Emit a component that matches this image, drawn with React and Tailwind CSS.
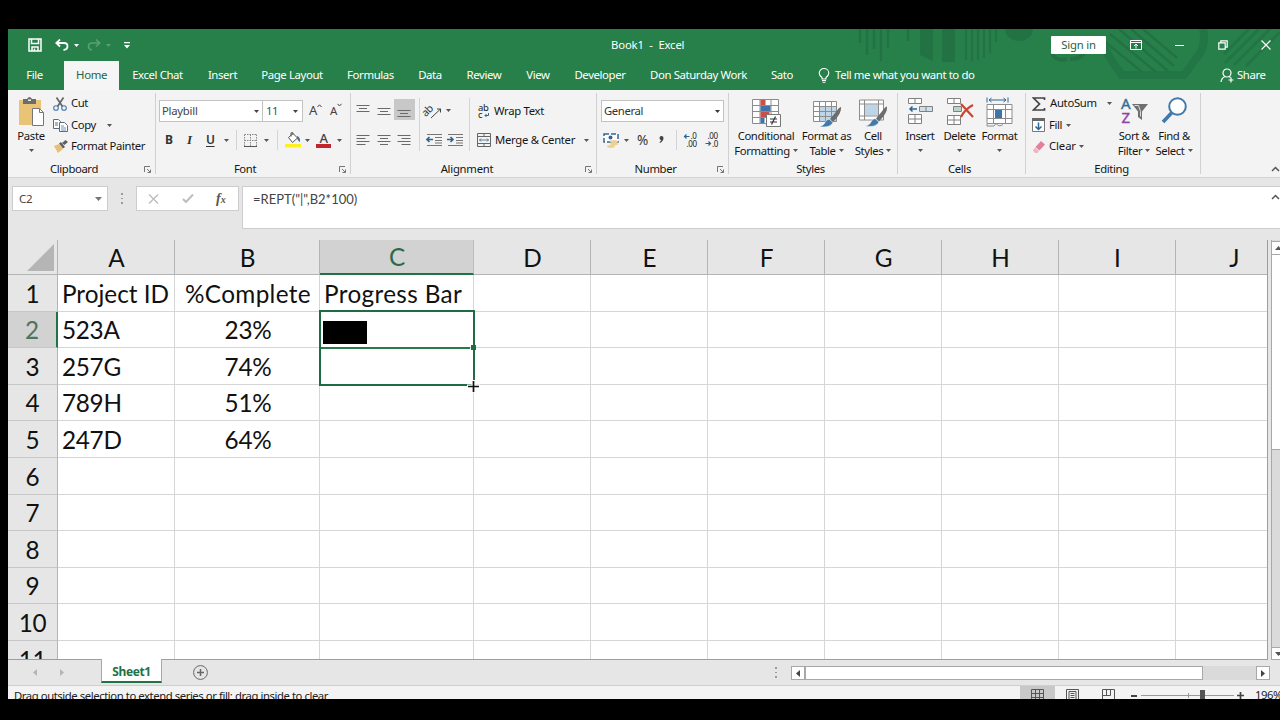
import React from "react";

const tabs = [
  { name: "File", width: "w-[56px] pr-[3px]" },
  { name: "Home", width: "w-[55px]", active: true },
  { name: "Excel Chat", width: "w-[77px]" },
  { name: "Insert", width: "w-[53px]" },
  { name: "Page Layout", width: "w-[86px]" },
  { name: "Formulas", width: "w-[71px]" },
  { name: "Data", width: "w-[48px]" },
  { name: "Review", width: "w-[60px]" },
  { name: "View", width: "w-[48px]" },
  { name: "Developer", width: "w-[76px]" },
  { name: "Don Saturday Work", width: "w-[121px]" },
  { name: "Sato", width: "w-[46px]" },
];

const columns = [
  { name: "A", width: "w-[117px]" },
  { name: "B", width: "w-[145px]" },
  { name: "C", width: "w-[154px]" },
  { name: "D", width: "w-[117px]" },
  { name: "E", width: "w-[117px]" },
  { name: "F", width: "w-[117px]" },
  { name: "G", width: "w-[117px]" },
  { name: "H", width: "w-[117px]" },
  { name: "I", width: "w-[117px]" },
  { name: "J", width: "w-[117px]" },
];

const cells = {
  A1: "Project ID",
  B1: "%Complete",
  C1: "Progress Bar",
  A2: "523A",
  B2: "23%",
  A3: "257G",
  B3: "74%",
  A4: "789H",
  B4: "51%",
  A5: "247D",
  B5: "64%",
};

const rows = [1, 2, 3, 4, 5, 6, 7, 8, 9, 10, 11];

const Caret = ({ className = "" }) => (
  <svg className={`h-[3px] w-[5px] shrink-0 ${className}`} viewBox="0 0 5 3" fill="currentColor">
    <path d="M0 0h5L2.5 3z" />
  </svg>
);

const Launcher = () => (
  <svg className="h-[7px] w-[7px]" viewBox="0 0 7 7" fill="none" stroke="#666" strokeWidth="0.9">
    <path d="M.5 6V.5H6M3 3l3 3M6.5 3.5v3h-3" />
  </svg>
);

const Divider = ({ className = "" }) => <div className={`w-px bg-[#d4d4d4] ${className}`} />;

const Lines = ({ d }) => (
  <svg className="h-[18px] w-[14px]" viewBox="0 0 14 18" fill="none" stroke="#6a6a6a" strokeWidth="1">
    <path d={d} />
  </svg>
);

// One ribbon section: tools on top, caption on the last line
const Group = ({ width, title, titleClass = "", launcher, children }) => (
  <div className={`flex h-full shrink-0 ${width}`}>
    <div className="min-w-0 flex-1">
      <div className="h-[70px]">{children}</div>
      <div className="flex h-[18px] items-center justify-center">
        <span className="w-[7px]" />
        <span className={`flex-1 text-center ${titleClass}`}>{title}</span>
        <span className="mr-[4px] w-[7px]">{launcher && <Launcher />}</span>
      </div>
    </div>
    <div className="mt-[3px] h-[81px] w-px bg-[#d0d0d0]" />
  </div>
);

const BigButton = ({ icon, top, bottom, width }) => (
  <div className={`flex shrink-0 flex-col items-center ${width}`}>
    <div className="flex h-[38px] items-end justify-center">{icon}</div>
    <div className="h-[15px] whitespace-nowrap leading-[15px]">{top}</div>
    <div className="flex h-[15px] items-center gap-[3px] leading-[15px]">
      {bottom && <span>{bottom}</span>}
      <Caret className="text-[#555]" />
    </div>
  </div>
);

const TitleArt = () => (
  <svg className="absolute right-0 top-0 h-[61px] w-[430px]" viewBox="850 29 430 61" fill="none" stroke="#227243">
    <g strokeWidth="2.5">
      <path d="M860 29v14M867 29v26M874 29v20M881 29v32M888 29v19M908 29v12" />
      <path d="M966 29v31M972 29v32M978 29v31M984 29v29M990 29v24M996 29v13" strokeWidth="2.2" />
    </g>
    <path d="M920 29h13v32l-13-6zM942 29h13v33h-13z" fill="#227243" stroke="none" />
    <path d="M1005 29a14 12 0 0 0 28 0z" fill="#227243" stroke="none" />
    <path d="M1052 54q5 8 15 5M1070 59q12 0 15-8" strokeWidth="4" />
    <path d="M1102 42q4 12 20 33h62l16-22q6-10 3-24" strokeWidth="8" opacity=".8" />
    <path d="M1110 34l46 38M1119 29l49 42M1131 29l43 37M1143 29l34 29M1104 41l38 31" strokeWidth="2.5" />
    <path d="M1259 29l-34 34M1270 29l-36 36M1280 32l-34 34M1249 29l-25 25" strokeWidth="3" opacity=".8" />
  </svg>
);

const TitleBar = () => (
  <div className="relative z-10 flex h-[32px] items-center tracking-[-0.35px] text-white">
    <svg className="ml-[20px] h-[14px] w-[14px]" viewBox="0 0 14 14" fill="none" stroke="white" strokeWidth="1.5">
      <path d="M1 1h12v12H1zM3.5 1v4.5h7V1M4 13V9h6v4M6.5 10.5V13" />
    </svg>
    <svg className="ml-[13px] h-[12px] w-[14px]" viewBox="0 0 14 12" fill="none" stroke="white" strokeWidth="1.8">
      <path d="M5 .5L1.3 4 5 7.5M1.5 4H9q3.5 0 3.5 3.3Q12.5 10.5 8.5 11" />
    </svg>
    <Caret className="ml-[5px]" />
    <svg className="ml-[8px] h-[12px] w-[14px]" viewBox="0 0 14 12" fill="none" stroke="#5b9f74" strokeWidth="1.6">
      <path d="M9 .5L12.7 4 9 7.5M12.5 4H5Q1.5 4 1.5 7.3 1.5 10.5 5 11" />
    </svg>
    <Caret className="ml-[5px] text-[#5b9f74]" />
    <svg className="ml-[13px] h-[7px] w-[6px]" viewBox="0 0 6 7" fill="white">
      <path d="M0 0h6v1.2H0zM0 3h6L3 6.5z" />
    </svg>
    <div className="ml-[481px] w-[74px] whitespace-nowrap text-[11.3px] tracking-[-0.15px]">Book1&nbsp; -&nbsp; Excel</div>
    <div className="ml-[366px] flex h-[18px] w-[55px] items-center justify-center rounded-[1px] bg-white text-[11.3px] tracking-[-0.2px] text-[#27663f]">
      Sign in
    </div>
    <svg className="ml-[24px] h-[10px] w-[12px]" viewBox="0 0 12 10" fill="none" stroke="white">
      <path d="M.5.5h11v9H.5zM.5 2.5h11M6 8.5v-4M4 6l2-2 2 2" />
    </svg>
    <div className="ml-[33px] mt-[1px] h-px w-[9px] bg-white" />
    <svg className="ml-[34px] h-[10px] w-[10px]" viewBox="0 0 10 10" fill="none" stroke="white" strokeWidth="1.2">
      <path d="M.8 2.8h6.4v6.4H.8zM2.8 2.8V.8h6.4v6.4h-2" />
    </svg>
    <svg className="ml-[33px] h-[10px] w-[10px]" viewBox="0 0 10 10" fill="none" stroke="white" strokeWidth="1.2">
      <path d="M.5.5l9 9M9.5.5l-9 9" />
    </svg>
  </div>
);

const RibbonTabs = () => (
  <div className="relative z-10 flex h-[29px] text-[11.4px] tracking-[-0.4px] text-white">
    {tabs.map((tab) => (
      <div
        key={tab.name}
        className={`flex shrink-0 items-center justify-center whitespace-nowrap pb-[1px] ${tab.width} ${
          tab.active ? "bg-[#f4f5f4] text-[#27663f]" : ""
        }`}
      >
        {tab.name}
      </div>
    ))}
    <svg className="ml-[13px] mt-[7px] h-[15px] w-[12px]" viewBox="0 0 12 15" fill="none" stroke="white" strokeWidth="1.1">
      <path d="M4 11V9.5Q1.2 7.5 1.2 5a4.8 4.5 0 0 1 9.6 0Q10.8 7.5 8 9.5V11zM4 12.5h4M4.5 14.3h3" />
    </svg>
    <div className="ml-[5px] flex w-[385px] items-center whitespace-nowrap pb-[1px]">Tell me what you want to do</div>
    <svg className="mt-[7px] h-[15px] w-[15px]" viewBox="0 0 15 15" fill="none" stroke="white" strokeWidth="1.2">
      <circle cx="7" cy="5" r="4" />
      <path d="M1 14q.5-4 4-5.5M9 8.5l1.5 1M11 9.5v5M8.5 12h5" />
    </svg>
    <div className="ml-[2px] flex items-center pb-[1px]">Share</div>
  </div>
);

const ClipboardGroup = () => (
  <Group width="w-[148px]" title="Clipboard" launcher titleClass="pr-[11px]">
    <div className="flex">
      <div className="ml-[7px] flex w-[32px] flex-col items-center">
        <svg className="mt-[6px] h-[31px] w-[28px]" viewBox="0 0 28 31">
          <path d="M2 4h22v25H2z" fill="#e9c477" />
          <path d="M6 3h4q2.500-4 5 0h4v5H6z" fill="#6c6c6c" />
          <path d="M11 4.200h3" stroke="#f3f3f3" strokeWidth="1.5" />
          <path d="M15.500 12.500h7l4 4v13h-11z" fill="#fff" stroke="#777" />
          <path d="M22.500 12.500v4h4" fill="none" stroke="#777" />
        </svg>
        <div className="mt-[1px] leading-[16px] tracking-[-0.3px]">Paste</div>
        <Caret className="mt-[5px] text-[#555]" />
      </div>
      <div className="ml-[6px] mt-[3px] flex flex-col">
        <div className="flex h-[21.5px] items-center">
          <svg className="mr-[4px] h-[14px] w-[14px]" viewBox="0 0 14 14" fill="none">
            <path d="M3.500.5l6 9M10.500.5l-6 9" stroke="#666" strokeWidth="1.7" />
            <circle cx="3" cy="11" r="2.3" stroke="#4a79ad" strokeWidth="1.1" />
            <circle cx="11" cy="11" r="2.3" stroke="#4a79ad" strokeWidth="1.1" />
          </svg>
          Cut
        </div>
        <div className="flex h-[21.5px] items-center">
          <svg className="mr-[3px] h-[13px] w-[15px]" viewBox="0 0 15 13" fill="#fff" stroke="#5e6b7b">
            <path d="M.5.5h5l2 2v7h-7zM2 4h3M2 6h3" />
            <path d="M6.500 3.500h5l3 3v6h-8z" />
            <path d="M8 7h3M8 9h5M8 11h5" stroke="#4a79ad" strokeWidth=".8" />
          </svg>
          <span className="w-[27px]">Copy</span>
          <Caret className="ml-[9px] text-[#555]" />
        </div>
        <div className="flex h-[21.5px] items-center whitespace-nowrap">
          <svg className="mr-[3px] h-[13px] w-[15px]" viewBox="0 0 15 13">
            <path d="M1 6l5-2 4 5-5 4z" fill="#e6bf78" />
            <path d="M6 3.500l2-1.500 4 5-2 1.500zM9 3l3.500-3L15 2l-3.500 3z" fill="#606060" />
          </svg>
          Format Painter
        </div>
      </div>
    </div>
  </Group>
);

const FontGroup = () => (
  <Group width="w-[195px]" title="Font" launcher titleClass="pr-[12px]">
    <div className="flex items-center pl-[3px] pt-[10px]">
      <div className="flex h-[22px] w-[104px] items-center justify-between border border-[#c3c3c3] bg-white px-[2px] text-[#444]">
        <span className="tracking-[-0.25px]">Playbill</span>
        <Caret className="mr-[1px]" />
      </div>
      <div className="-ml-px flex h-[22px] w-[41px] items-center justify-between border border-[#c3c3c3] bg-white px-[3px] text-[#3f5a3f]">
        11
        <Caret className="mr-px text-[#444]" />
      </div>
      <div className="ml-[6px] flex w-[13px] items-start text-[13px] text-[#444]">
        A<svg className="mt-[3px] h-[4px] w-[5px] shrink-0" viewBox="0 0 5 4" fill="none" stroke="#444"><path d="M.5 3L2.500.8 4.500 3" /></svg>
      </div>
      <div className="ml-[8px] flex w-[13px] items-start text-[11.5px] text-[#444]">
        A<svg className="mt-[1px] h-[4px] w-[5px] shrink-0" viewBox="0 0 5 4" fill="none" stroke="#444"><path d="M.5.8L2.500 3 4.500.8" /></svg>
      </div>
    </div>
    <div className="mt-[8px] flex h-[20px] items-center pl-[9px] text-[#333]">
      <b className="w-[22px] text-[12px]">B</b>
      <i className="w-[19px] font-['Liberation_Serif',serif] text-[13px] font-bold">I</i>
      <span className="w-[9px] text-[12px] font-semibold underline underline-offset-2">U</span>
      <Caret className="ml-[9px] text-[#555]" />
      <Divider className="ml-[7px] h-[20px]" />
      <svg className="ml-[7px] h-[13px] w-[13px]" viewBox="0 0 13 13" fill="none" stroke="#8a8a8a">
        <path d="M.5.5v12M6.500.5v12M12.500.5v12M.5.5h12M.5 6.500h12" strokeDasharray="1.5 1" />
        <path d="M0 12.500h13" stroke="#555" />
      </svg>
      <Caret className="ml-[7px] text-[#555]" />
      <Divider className="ml-[8px] h-[20px]" />
      <svg className="ml-[7px] h-[16px] w-[16px]" viewBox="0 0 16 16" fill="none">
        <path d="M3.500 5.500L8 1.500l4.500 4.500-5 4.500z" fill="#fff" stroke="#555" />
        <path d="M6 4.500V.8h2v2" stroke="#555" />
        <path d="M12 4q3.500 1 3 6-2-1-3-3.500" fill="#4a6f9d" />
        <path d="M0 12h16v3.500H0z" fill="#ffef1f" />
      </svg>
      <Caret className="ml-[4px] text-[#555]" />
      <div className="ml-[6px] flex h-[15px] w-[15px] flex-col items-center">
        <span className="text-[13px] font-medium leading-[11px] text-[#444]">A</span>
        <span className="h-[4px] w-[15px] shrink-0 bg-[#c4252c]" />
      </div>
      <Caret className="ml-[6px] text-[#555]" />
    </div>
  </Group>
);

const AlignmentGroup = () => (
  <Group width="w-[246px]" title="Alignment" launcher titleClass="pr-[9px] tracking-[-0.25px]">
    <div className="flex pl-[2px] pt-[8px]">
      <div className="grid h-[56px] w-[66px] grid-cols-[20.5px_20.5px_20.5px] grid-rows-[25px_31px]">
        <div className="flex items-center justify-center pb-[4px]"><Lines d="M.5 5.500h13M3 8.500h8M.5 11.500h13" /></div>
        <div className="flex items-center justify-center"><Lines d="M.5 6.500h13M3 9.500h8M.5 12.500h13" /></div>
        <div className="mb-[3px] mt-[1px] flex items-center justify-center bg-[#c8c8c8] pt-[4px]"><Lines d="M.5 7.500h13M3 10.500h8M.5 13.500h13" /></div>
        <div className="flex items-center justify-center pt-[2px]"><Lines d="M.5 4.500h13M.5 7.500h9M.5 10.500h13M.5 13.500h9" /></div>
        <div className="flex items-center justify-center pt-[2px]"><Lines d="M.5 4.500h13M3 7.500h8M.5 10.500h13M3 13.500h8" /></div>
        <div className="flex items-center justify-center pt-[2px]"><Lines d="M.5 4.500h13M4.500 7.500h9M.5 10.500h13M4.500 13.500h9" /></div>
      </div>
      <Divider className="h-[53px]" />
      <div className="flex w-[49px] flex-col pl-[6px]">
        <div className="flex h-[25px] items-center">
          <svg className="h-[16px] w-[16px] overflow-visible" viewBox="0 0 16 16" fill="none" stroke="#444">
            <text x="-3" y="8" transform="rotate(-45 6 8)" fontSize="10.500" fill="#333" stroke="none">ab</text>
            <path d="M5 15L14.500 6M11 6h3.500v3.500" />
          </svg>
          <Caret className="ml-[4px] text-[#555]" />
        </div>
        <div className="flex h-[31px] items-center gap-[5px] pt-[3px]">
          <svg className="h-[14px] w-[16px] shrink-0" viewBox="0 0 16 14" fill="none" stroke="#777">
            <path d="M1 1.500h15M9 4.500h7M9 7.500h7M1 12.500h15M9 10h7" />
            <path d="M7 6.500H1M3.500 4L1 6.500 3.500 9" stroke="#2c6595" strokeWidth="1.6" />
          </svg>
          <svg className="h-[14px] w-[16px] shrink-0" viewBox="0 0 16 14" fill="none" stroke="#777">
            <path d="M1 1.500h15M9 4.500h7M9 7.500h7M1 12.500h15M9 10h7" />
            <path d="M0 6.500h6M3.500 4L6 6.500 3.500 9" stroke="#2c6595" strokeWidth="1.6" />
          </svg>
        </div>
      </div>
      <Divider className="h-[53px]" />
      <div className="flex flex-col pl-[7px]">
        <div className="flex h-[25px] items-center whitespace-nowrap pt-[1px]">
          <svg className="mr-[3px] h-[15px] w-[14px] overflow-visible" viewBox="0 0 14 15">
            <text x="1" y="6.500" fontSize="9.500" fill="#222">ab</text>
            <text x="1" y="14" fontSize="9.500" fill="#222">c</text>
            <path d="M11.500 9v2.500H8M9.500 10L8 11.500 9.500 13" fill="none" stroke="#2c6595" />
          </svg>
          <span className="tracking-[-0.3px]">Wrap Text</span>
        </div>
        <div className="flex h-[31px] items-center whitespace-nowrap pt-[3px]">
          <svg className="mr-[4px] h-[14px] w-[14px]" viewBox="0 0 14 14" fill="none" stroke="#666">
            <path d="M.5.5h13v13H.5zM.5 3.500h13M.5 10.500h13M7 .5v3M7 10.500v3" />
            <path d="M2.500 7h9M4 5.500L2.500 7 4 8.500M10 5.500L11.500 7 10 8.500" stroke="#2c6595" strokeWidth=".8" />
          </svg>
          <span className="w-[89px] tracking-[-0.3px]">Merge &amp; Center</span>
          <Caret className="text-[#555]" />
        </div>
      </div>
    </div>
  </Group>
);

const NumberGroup = () => (
  <Group width="w-[132px]" title="Number" launcher titleClass="pr-[10px]">
    <div className="pl-[4px] pt-[10px]">
      <div className="flex h-[22px] w-[123px] items-center justify-between border border-[#c3c3c3] bg-white px-[2px] text-[#333]">
        General
        <Caret className="mr-px" />
      </div>
      <div className="mt-[8px] flex h-[20px] items-center pl-[2px]">
        <svg className="h-[15px] w-[16px]" viewBox="0 0 16 15">
          <path d="M1 1h14v8H1z" fill="#fff" stroke="#2f6797" strokeWidth="1.500" strokeDasharray="5 2" />
          <circle cx="7.500" cy="4.500" r="2" fill="#2f6797" />
          <g fill="#efd093">
            <ellipse cx="11" cy="8.500" rx="4" ry="1.5" />
            <ellipse cx="11" cy="11" rx="4" ry="1.4" />
            <ellipse cx="8" cy="13.500" rx="4" ry="1.4" />
          </g>
        </svg>
        <Caret className="ml-[5px] text-[#555]" />
        <span className="ml-[8px] w-[13px] text-[13.5px] text-[#333]">%</span>
        <svg className="ml-[9px] mt-[-2px] h-[7px] w-[5px]" viewBox="0 0 5 7" fill="#444">
          <path d="M.5 2a2 2 0 0 1 4 0Q4.500 5 1 7L.5 6.200Q2 5 2.200 4 .5 3.800.5 2z" />
        </svg>
        <Divider className="ml-[12px] h-[20px]" />
        <svg className="ml-[7px] h-[14px] w-[15px] overflow-visible" viewBox="0 0 15 14">
          <text x="6.500" y="6" fontSize="8" fill="#222">.0</text>
          <text x="2.500" y="13.500" fontSize="8" fill="#222">.00</text>
          <path d="M5.500 3.500H.8M2.500 1.500l-2 2 2 2" fill="none" stroke="#2c6595" strokeWidth="1.2" />
        </svg>
        <svg className="ml-[6px] h-[14px] w-[15px] overflow-visible" viewBox="0 0 15 14">
          <text x="2.500" y="6" fontSize="8" fill="#222">.00</text>
          <text x="7" y="13.500" fontSize="8" fill="#222">.0</text>
          <path d="M.5 10.500h4.700M3.500 8.500l2 2-2 2" fill="none" stroke="#2c6595" strokeWidth="1.2" />
        </svg>
      </div>
    </div>
  </Group>
);

const ConditionalIcon = () => (
  <svg className="h-[30px] w-[30px]" viewBox="0 0 30 30">
    <path d="M1.500 1.500h26v24h-26z" fill="#fff" />
    <path d="M1.500 1.500h26v24h-26zM1.500 7.500h26M1.500 13.500h26M1.500 19.500h26M9 1.500v24M20 1.500v24" fill="none" stroke="#8c8c8c" />
    <path d="M9.500 2h5v5h-5zM9.500 14h9v5h-9z" fill="#cf4f45" />
    <path d="M9.500 8h10v5h-10zM9.500 20h4v5h-4z" fill="#3f74a8" />
    <path d="M15.500 16.500h14v12h-14z" fill="#fff" stroke="#777" />
    <path d="M19 21h7M19 24h7M24.500 18.500l-4 8" fill="none" stroke="#333" strokeWidth="1.2" />
  </svg>
);

const Brush = () => (
  <>
    <path d="M29 8q-1-1-6 6l-5 6 3 3q9-9 8-15z" fill="#6d6d6d" />
    <path d="M17 20l4 3.500q-3 6-14 4 5-1 6-4 1-3 4-3.500z" fill="#4079ab" stroke="#f3f3f3" strokeWidth=".6" />
  </>
);

const TableStyleIcon = () => (
  <svg className="h-[29px] w-[30px]" viewBox="0 0 30 29">
    <path d="M1.500 2.500h23v20h-23z" fill="#fff" />
    <path d="M7 8h17.500v14.500H7z" fill="#bdd5e6" />
    <path d="M1.500 2.500h23v20h-23zM1.500 7.500h23M1.500 12.500h23M1.500 17.500h23M7.500 2.500v20M13.500 2.500v20M19.500 2.500v20" fill="none" stroke="#8c8c8c" />
    <Brush />
  </svg>
);

const CellStyleIcon = () => (
  <svg className="h-[30px] w-[30px]" viewBox="0 0 30 29">
    <path d="M1.500 1.500h24v20h-24z" fill="#fff" />
    <path d="M7 6h13v11H7z" fill="#bdd5e6" />
    <path d="M1.500 1.500h24v20h-24zM1.500 5.500h24M1.500 17.500h24M6.500 1.500v20M20.500 1.500v20" fill="none" stroke="#8c8c8c" />
    <Brush />
  </svg>
);

const StylesGroup = () => (
  <Group width="w-[169px]" title="Styles" titleClass="pr-[1px]">
    <div className="flex">
      <BigButton width="w-[74px]" icon={<ConditionalIcon />} top="Conditional" bottom="Formatting" />
      <BigButton width="w-[47px]" icon={<TableStyleIcon />} top="Format as" bottom="Table" />
      <BigButton width="w-[46px]" icon={<CellStyleIcon />} top="Cell" bottom="Styles" />
    </div>
  </Group>
);

const CellsGroup = () => (
  <Group width="w-[128px]" title="Cells">
    <div className="flex pl-[2px]">
      <BigButton
        width="w-[40px]"
        top="Insert"
        icon={
          <svg className="mb-[3px] h-[27px] w-[26px]" viewBox="0 0 26 27" fill="#fff" stroke="#808080">
            <path d="M1.500.5h13v5h-13zM8 .5v5M1.500 16.500h13v9h-13zM8 16.500v9M1.500 21h13" />
            <path d="M12.500 8.500h13v5h-13zM19 8.500v5" fill="#cfe0ea" />
            <path d="M10 11H3M5.500 8.500L3 11l2.500 2.500" fill="none" stroke="#2c6595" strokeWidth="1.5" />
          </svg>
        }
      />
      <BigButton
        width="w-[39px]"
        top="Delete"
        icon={
          <svg className="mb-[2px] h-[28px] w-[28px]" viewBox="0 0 28 28" fill="#fff" stroke="#808080">
            <path d="M1.500.5h13v5h-13zM8 .5v5M1.500 17.500h13v9h-13zM8 17.500v9M1.500 22h13" />
            <path d="M7.500 8.500h8v5h-8z" fill="#bcd3c8" />
            <path d="M15 6l12 13M27 7Q19 11 15 19" fill="none" stroke="#cb4430" strokeWidth="2.2" />
          </svg>
        }
      />
      <BigButton
        width="w-[41px]"
        top="Format"
        icon={
          <svg className="h-[31px] w-[27px]" viewBox="0 0 27 31" fill="#fff" stroke="#8c8c8c">
            <path d="M1 7.500h25v19h-25zM1 12.500h25M1 21.500h25M7.500 7.500v19M19.500 7.500v19" />
            <path d="M9 13h7v8H9z" fill="#3f74a8" stroke="none" />
            <path d="M1 27v2h7l2-2.500M10 26.500q3 4 7 1" fill="none" />
            <path d="M1 .5v5M22 .5v5M3 3h17M5.500 1L3 3l2.500 2M17.500 1L20 3l-2.500 2" fill="none" stroke="#2c6595" />
          </svg>
        }
      />
    </div>
  </Group>
);

const EditingGroup = () => (
  <Group width="w-[175px]" title="Editing" titleClass="pl-[1px]">
    <div className="flex">
      <div className="flex w-[87px] flex-col pl-[6px] pt-[3px]">
        <div className="flex h-[21.5px] items-center">
          <svg className="mr-[4px] h-[14px] w-[14px] shrink-0" viewBox="0 0 14 14" fill="none" stroke="#444" strokeWidth="1.7">
            <path d="M12.500 3V1H1.500l6 6-6 6h11v-2" />
          </svg>
          <span className="w-[55px] shrink-0 tracking-[-0.3px]">AutoSum</span>
          <Caret className="ml-[2px] text-[#555]" />
        </div>
        <div className="flex h-[21.5px] items-center">
          <svg className="mr-[4px] h-[14px] w-[13px]" viewBox="0 0 13 14" fill="#fff" stroke="#777">
            <path d="M.5.5h12v13H.5z" />
            <path d="M0 1.500h13" stroke="#666" strokeWidth="3" />
            <path d="M6.500 4.500v7M3.500 8.500l3 3 3-3" fill="none" stroke="#2c6595" strokeWidth="1.5" />
          </svg>
          Fill
          <Caret className="ml-[4px] text-[#555]" />
        </div>
        <div className="flex h-[21.5px] items-center">
          <svg className="ml-px mr-[4px] h-[12px] w-[12px]" viewBox="0 0 12 12">
            <path d="M8 0l4 3.500-5.500 6L2.500 6z" fill="#e1819b" />
            <path d="M2 6.500L6 10l-1.500 2H2L0 9.500z" fill="#efb3c2" />
          </svg>
          <span className="tracking-[-0.1px]">Clear</span>
          <Caret className="ml-[3px] text-[#555]" />
        </div>
      </div>
      <BigButton
        width="w-[42px]"
        top="Sort &amp;"
        bottom="Filter"
        icon={
          <svg className="mb-[4px] h-[27px] w-[28px] overflow-visible" viewBox="0 0 28 27">
            <text x="1" y="11.500" fontSize="15" fill="#2f7199" stroke="#2f7199" strokeWidth=".4">A</text>
            <text x="1.500" y="25.500" fontSize="15" fill="#9040a8" stroke="#9040a8" strokeWidth=".4">Z</text>
            <path d="M12 7h16l-6 7.500V23l-4-3v-5.500z" fill="#6f6f6f" />
            <path d="M14.500 8.500h4l2 6v5" fill="none" stroke="#ddd" />
          </svg>
        }
      />
      <BigButton
        width="w-[38px]"
        top="Find &amp;"
        bottom="Select"
        icon={
          <svg className="mb-[4px] h-[27px] w-[27px]" viewBox="0 0 27 27" fill="#fff" stroke="#4079ab">
            <circle cx="16.500" cy="9.500" r="8.300" strokeWidth="2" />
            <path d="M10.500 16L2 25" strokeWidth="3.6" />
          </svg>
        }
      />
    </div>
  </Group>
);

const Ribbon = () => (
  <div className="flex h-[88px] border-b border-[#d5d5d5] bg-[#f3f3f3] text-[11.3px] tracking-[-0.38px] text-[#161616]">
    <ClipboardGroup />
    <FontGroup />
    <AlignmentGroup />
    <NumberGroup />
    <StylesGroup />
    <CellsGroup />
    <EditingGroup />
    <div className="flex flex-1 items-end justify-end pb-[5px]">
      <svg className="h-[6px] w-[9px]" viewBox="0 0 9 6" fill="none" stroke="#555" strokeWidth="1.5">
        <path d="M1 5l3.500-3.500L8 5" />
      </svg>
    </div>
  </div>
);

const Grip = () => (
  <div className="flex flex-col gap-[3px]">
    <span className="h-[1.5px] w-[1.5px] bg-[#9a9a9a]" />
    <span className="h-[1.5px] w-[1.5px] bg-[#9a9a9a]" />
    <span className="h-[1.5px] w-[1.5px] bg-[#9a9a9a]" />
  </div>
);

const FormulaBar = () => (
  <div className="flex h-[62px] bg-[#e6e6e6] pt-[8px] text-[#444]">
    <div className="ml-[4px] flex h-[25px] w-[96px] items-center justify-between border border-[#cdcdcd] bg-white pl-[6px] pr-[5px] text-[11.5px]">
      <span className="tracking-[-0.3px]">C2</span>
      <svg className="h-[4px] w-[7px]" viewBox="0 0 7 4" fill="#777"><path d="M0 0h7L3.500 4z" /></svg>
    </div>
    <div className="ml-[13px] mt-[7px] w-[15px]"><Grip /></div>
    <div className="flex h-[25px] w-[103px] items-center border border-[#cdcdcd] bg-white">
      <svg className="ml-[11px] h-[10px] w-[11px]" viewBox="0 0 11 10" fill="none" stroke="#bdbdbd" strokeWidth="1.3">
        <path d="M1 .5l9 9M10 .5l-9 9" />
      </svg>
      <svg className="ml-[23px] h-[9px] w-[12px]" viewBox="0 0 12 9" fill="none" stroke="#bdbdbd" strokeWidth="2">
        <path d="M1 5l3 3 7-7.500" />
      </svg>
      <span className="ml-[22px] font-['Liberation_Serif',serif] text-[14px] font-bold italic leading-none text-[#555]">
        f<span className="text-[10px]">x</span>
      </span>
    </div>
    <div className="ml-[3px] flex h-[43px] flex-1 justify-between border border-r-0 border-[#cdcdcd] bg-white pl-[10px]">
      <span className="mt-[3px] font-['Lato',sans-serif] text-[13px]">=REPT("|",B2*100)</span>
      <svg className="mt-[7px] h-[6px] w-[9px]" viewBox="0 0 9 6" fill="none" stroke="#555" strokeWidth="1.5">
        <path d="M1 5l3.500-3.500L8 5" />
      </svg>
    </div>
  </div>
);

// Fill-handle drag in progress: C2 is the source, C3 the target
const Selection = () => (
  <div className="absolute left-[311px] top-[70px] h-[76px] w-[156px] border-[2.5px] border-[#1f6b43]">
    <div className="absolute left-[2px] top-[9px] h-[23px] w-[44px] bg-black" />
    <div className="absolute left-0 top-[35px] h-[2px] w-[149px] bg-[#267a4c]" />
    <div className="absolute -right-[3px] top-[33px] h-[5px] w-[5px] bg-[#1f6b43]" />
    <svg className="absolute -bottom-[9px] -right-[7px] h-[13px] w-[13px]" viewBox="0 0 13 13" fill="none">
      <path d="M6.500 0v13M0 6.500h13" stroke="#fff" strokeWidth="4" />
      <path d="M6.500 1v11M1 6.500h11" stroke="#111" strokeWidth="1.7" />
    </svg>
  </div>
);

const cellTracking = (col, row) => {
  if (row > 1) return "tracking-[-0.3px]";
  return col === "A" ? "tracking-normal" : "tracking-[0.35px]";
};

const Sheet = () => (
  <div className="relative h-[420px] w-[1260px] shrink-0 overflow-hidden border-b border-r border-[#9d9d9d] bg-white font-['Lato',sans-serif] text-[24.3px] text-[#111]">
    <div className="flex h-[35px]">
      <div className="flex w-[50px] shrink-0 items-end justify-end border-b border-r border-[#b4b4b4] bg-[#e6e6e6] pb-[3px] pr-[3px]">
        <svg className="h-[27px] w-[27px]" viewBox="0 0 27 27" fill="#b5b5b5"><path d="M27 0v27H0z" /></svg>
      </div>
      {columns.map((col) => (
        <div
          key={col.name}
          className={`flex shrink-0 items-center justify-center border-r pl-[1px] pt-[2px] ${col.width} ${
            col.name === "C"
              ? "border-b-2 border-[#bdbdbd] border-b-[#217346] bg-[#d2d2d2] text-[#2d6a4a]"
              : "border-b border-[#b4b4b4] bg-[#e6e6e6]"
          }`}
        >
          {col.name}
        </div>
      ))}
    </div>
    {rows.map((row) => (
      <div key={row} className="flex h-[36.62px]">
        <div
          className={`flex w-[50px] shrink-0 items-center justify-center border-b border-b-[#c6c6c6] pt-[2px] tracking-[-0.3px] ${
            row === 2
              ? "border-r-2 border-r-[#217346] bg-[#d2d2d2] text-[#4d7561]"
              : "border-r border-r-[#b4b4b4] bg-[#e6e6e6]"
          }`}
        >
          {row}
        </div>
        {columns.map((col) => (
          <div
            key={col.name}
            className={`flex shrink-0 items-center whitespace-nowrap border-b border-r border-[#d6d6d6] pt-[2px] ${col.width} ${cellTracking(
              col.name,
              row
            )} ${col.name === "B" ? "justify-center pl-[2px]" : "pl-[4px]"}`}
          >
            {cells[`${col.name}${row}`]}
          </div>
        ))}
      </div>
    ))}
    <Selection />
  </div>
);

const VerticalScroll = () => (
  <div className="ml-[3px] flex h-[420px] flex-1 flex-col overflow-hidden border-l border-[#a8a8a8] bg-[#dadada]">
    <div className="mt-[1px] flex h-[14px] items-center border-y border-[#a8a8a8] bg-white pl-[3px]">
      <svg className="h-[4px] w-[7px] shrink-0" viewBox="0 0 7 4" fill="#555"><path d="M0 4h7L3.500 0z" /></svg>
    </div>
    <div className="h-[195px] border-b border-[#a8a8a8] bg-white" />
    <div className="flex-1" />
    <div className="flex h-[13px] items-center border-y border-[#a8a8a8] bg-white pl-[3px]">
      <svg className="h-[4px] w-[7px] shrink-0" viewBox="0 0 7 4" fill="#555"><path d="M0 0h7L3.500 4z" /></svg>
    </div>
  </div>
);

const SheetTabs = () => (
  <div className="flex h-[26px] border-b border-[#cfcfcf] bg-[#e6e6e6]">
    <div className="flex w-[93px] items-center pl-[25px]">
      <svg className="h-[7px] w-[4px]" viewBox="0 0 4 7" fill="#b5b5b5"><path d="M4 0v7L0 3.500z" /></svg>
      <svg className="ml-[23px] h-[7px] w-[4px]" viewBox="0 0 4 7" fill="#b5b5b5"><path d="M0 0v7l4-3.500z" /></svg>
    </div>
    <div className="relative -mt-px flex h-[24px] w-[61px] items-center justify-center border-x border-b-2 border-[#a8a8a8] border-b-[#217346] bg-white pt-[4px] text-[12px] font-bold tracking-[-0.4px] text-[#217346]">
      Sheet1
    </div>
    <svg className="ml-[31px] mt-[5px] h-[15px] w-[15px]" viewBox="0 0 15 15" fill="none" stroke="#666">
      <circle cx="7.500" cy="7.500" r="6.900" />
      <path d="M7.500 4v7M4 7.500h7" strokeWidth="1.5" />
    </svg>
    <div className="ml-[567px] mt-[7px] w-[16px]"><Grip /></div>
    <div className="mt-[6px] flex h-[14px] w-[479px] bg-[#dadada]">
      <div className="flex w-[14px] items-center justify-center border border-[#a8a8a8] bg-white">
        <svg className="h-[7px] w-[4px]" viewBox="0 0 4 7" fill="#444"><path d="M4 0v7L0 3.500z" /></svg>
      </div>
      <div className="w-[398px] border border-[#a8a8a8] bg-white" />
      <div className="flex-1" />
      <div className="flex w-[14px] items-center justify-center border border-[#a8a8a8] bg-white">
        <svg className="h-[7px] w-[4px]" viewBox="0 0 4 7" fill="#444"><path d="M0 0v7l4-3.500z" /></svg>
      </div>
    </div>
  </div>
);

const StatusBar = () => (
  <div className="flex h-[13px] overflow-hidden bg-[#f3f3f3] text-[11.3px] text-[#222]">
    <div className="w-[1012px] shrink-0 whitespace-nowrap pl-[6px] leading-[19px] tracking-[-0.43px]">
      Drag outside selection to extend series or fill; drag inside to clear
    </div>
    <div className="flex h-[13px] w-[35px] shrink-0 justify-center bg-[#c8c8c8] pt-[3px]">
      <svg className="h-[12px] w-[13px]" viewBox="0 0 13 12" fill="none" stroke="#555">
        <path d="M.5.5h12v11H.5zM.5 4.500h12M.5 8.500h12M4.500.5v11M8.500.5v11" />
      </svg>
    </div>
    <svg className="ml-[11px] mt-[3px] h-[12px] w-[13px] shrink-0" viewBox="0 0 13 12" fill="none" stroke="#555">
      <path d="M.5.5h12v12H.5zM3 2.500h7v10H3zM4.500 4.500h4M4.500 6.500h4M4.500 8.500h4" />
    </svg>
    <svg className="ml-[23px] mt-[3px] h-[12px] w-[13px] shrink-0" viewBox="0 0 13 12" fill="none" stroke="#555">
      <path d="M.5.5h12v12H.5zM.5 6.500h8v-6M4.500.5v6" />
    </svg>
    <div className="ml-[16px] mt-[9px] h-[2px] w-[6px] shrink-0 bg-[#444]" />
    <div className="ml-[4px] mt-[4px] flex h-[12px] w-[93px] shrink-0">
      <div className="mt-[5px] h-px w-[47px] bg-[#999]" />
      <div className="mt-[3px] h-[5px] w-px bg-[#999]" />
      <div className="mt-[5px] h-px w-[11px] bg-[#999]" />
      <div className="h-[12px] w-[5px] bg-[#555]" />
      <div className="mt-[5px] h-px flex-1 bg-[#999]" />
    </div>
    <svg className="ml-[3px] mt-[6px] h-[7px] w-[7px] shrink-0" viewBox="0 0 7 7" stroke="#444" strokeWidth="1.7">
      <path d="M3.500 0v7M0 3.500h7" />
    </svg>
    <div className="ml-[11px] shrink-0 leading-[18px] tracking-[-0.5px]">196%</div>
  </div>
);

const App = () => {
  return (
    <div className="h-[720px] w-[1280px] overflow-hidden bg-black pl-[8px] pt-[29px] font-['Noto_Sans','Open_Sans',sans-serif] leading-normal">
      <div className="h-[670px] w-[1272px] overflow-hidden bg-[#e6e6e6]">
        <div className="relative bg-[#27804a]">
          <TitleArt />
          <TitleBar />
          <RibbonTabs />
        </div>
        <Ribbon />
        <FormulaBar />
        <div className="flex bg-[#e6e6e6]">
          <Sheet />
          <VerticalScroll />
        </div>
        <SheetTabs />
        <StatusBar />
      </div>
    </div>
  );
};

export default App;
